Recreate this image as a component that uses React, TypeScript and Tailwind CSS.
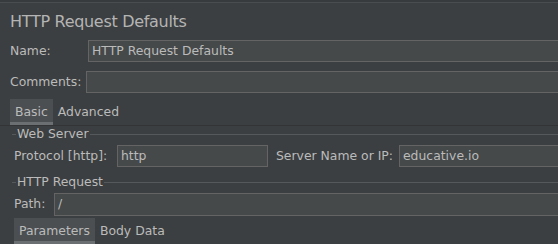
const font = { fontFamily: '"DejaVu Sans", "Liberation Sans", sans-serif' };

function Field({ value = "", className = "" }: { value?: string; className?: string }) {
  return (
    <div
      className={`h-[22px] border border-[#646464] bg-[#45494a] flex items-center pl-[3px] text-[12.4px] leading-none text-[#bbbbbb] shrink-0 ${className}`}
    >
      {value}
    </div>
  );
}

function Titled({ title }: { title: string }) {
  return (
    <div className="h-[16px] flex items-center pl-[12px]">
      <div className="w-[4px] h-px bg-[#55595b]" />
      <span className="px-[1px] text-[12.4px] leading-none">{title}</span>
      <div className="flex-1 h-px bg-[#55595b]" />
    </div>
  );
}

function Tabs({ items, className = "" }: { items: string[]; className?: string }) {
  return (
    <div className={`flex h-[26px] text-[12.4px] leading-none ${className}`}>
      {items.map((it, i) => (
        <div
          key={it}
          className={
            i === 0
              ? "flex items-center px-[5px] bg-[#4b4f52] border-b-[3px] border-[#6b6f72] pt-[3px]"
              : "flex items-center px-[5px]"
          }
        >
          {it}
        </div>
      ))}
    </div>
  );
}

export default function App() {
  return (
    <div
      style={font}
      className="w-[558px] h-[244px] overflow-hidden bg-[#3c3f41] text-[#bbbbbb]"
    >
      <div className="h-[3px] border-b border-[#4a4d50] bg-[#383b3d]" />

      <div className="h-[37px] flex items-center pl-[10px] text-[16px] leading-none tracking-[-0.3px] text-[#b4b4b4]">
        HTTP Request Defaults
      </div>

      <div className="flex items-center h-[22px]">
        <span className="w-[88px] pl-[10px] text-[12.4px] leading-none shrink-0">Name:</span>
        <Field value="HTTP Request Defaults" className="w-[480px]" />
      </div>

      <div className="flex items-center h-[22px] mt-[9px]">
        <span className="w-[86px] pl-[10px] text-[12.4px] leading-none shrink-0">Comments:</span>
        <Field className="w-[480px]" />
      </div>

      <Tabs items={["Basic", "Advanced"]} className="mt-[6px] pl-[10px]" />
      <div className="h-px bg-[#323436]" />

      <Titled title="Web Server" />

      <div className="flex items-center h-[22px] mt-[3px] text-[12.4px] leading-none">
        <span className="w-[117px] pl-[14px] shrink-0">Protocol [http]:</span>
        <Field value="http" className="w-[151px]" />
        <span className="w-[131px] pl-[8px] shrink-0">Server Name or IP:</span>
        <Field value="educative.io" className="w-[200px]" />
      </div>

      <div className="mt-[7px]">
        <Titled title="HTTP Request" />
      </div>

      <div className="flex items-center h-[23px] mt-[3px] text-[12.4px] leading-none">
        <span className="w-[54px] pl-[14px] shrink-0">Path:</span>
        <Field value="/" className="w-[520px] h-[23px]" />
      </div>

      <Tabs items={["Parameters", "Body Data"]} className="mt-[2px] pl-[14px]" />
    </div>
  );
}
